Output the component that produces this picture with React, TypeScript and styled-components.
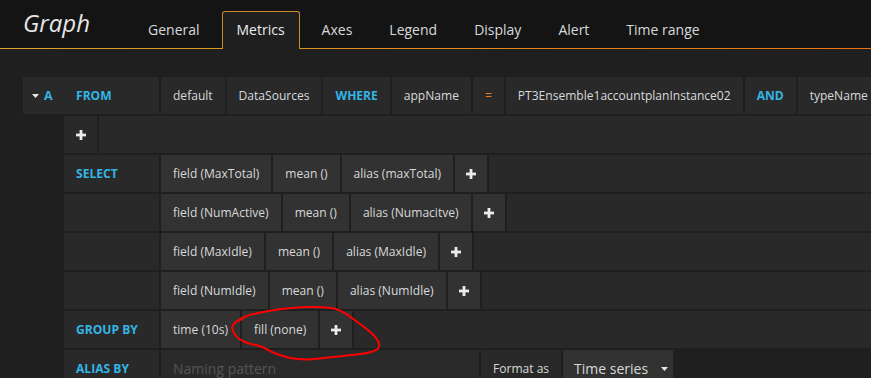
import React from "react";
import styled, { createGlobalStyle, css } from "styled-components";

const GlobalStyle = createGlobalStyle`
  html, body { margin: 0; padding: 0; background: #1f1f1f; overflow: hidden; }
  body { font-family: "Open Sans", "Noto Sans", sans-serif; color: #d8d9da; }
  #root { width: 871px; height: 378px; overflow: hidden; position: relative; }
`;

const Page = styled.div`
  position: relative;
  width: 871px;
  height: 378px;
  overflow: hidden;
`;

const Header = styled.header`
  display: flex;
  align-items: flex-end;
  height: 48px;
  background: #141414;
  padding-left: 23px;
  border-bottom: 1px solid transparent;
  border-image: linear-gradient(to right, #dba326, #e8720f) 1;
`;

const Title = styled.h2`
  margin: 11px 0 0 0;
  align-self: flex-start;
  width: 110px;
  font-size: 24px;
  line-height: 24px;
  font-style: italic;
  font-weight: 400;
  color: #e6e6e6;
`;

const Tab = styled.div<{ $active?: boolean }>`
  height: 38px;
  box-sizing: border-box;
  padding: 0 14px;
  margin-right: 7px;
  margin-bottom: -1px;
  line-height: 35px;
  font-size: 14px;
  color: #d8d9da;
  border: 1px solid transparent;
  border-bottom: none;
  border-radius: 3px 3px 0 0;
  ${(p) =>
    p.$active &&
    css`
      border-color: #c98a2b;
      background: #1f1f1f;
      color: #ececec;
    `}
`;

const Editor = styled.section`
  width: 1100px;
  padding: 28px 0 0 23px;
`;

const Row = styled.div<{ $indent?: boolean }>`
  display: flex;
  flex-wrap: nowrap;
  gap: 2px;
  height: 37px;
  margin-bottom: 2px;
  margin-left: ${(p) => (p.$indent ? 41 : 0)}px;
`;

const RowHead = styled.div`
  display: flex;
`;

const HeadCell = styled.div`
  display: flex;
  align-items: center;
  gap: 5px;
  width: 41px;
  box-sizing: border-box;
  padding-left: 9px;
  background: #292929;
  color: #33b5e5;
  font-weight: 700;
  font-size: 12.5px;
`;

const Keyword = styled.div`
  display: flex;
  align-items: center;
  width: 95px;
  box-sizing: border-box;
  padding-left: 12px;
  background: #292929;
  color: #33b5e5;
  font-weight: 700;
  font-size: 12.1px;
  white-space: nowrap;
`;

const Segment = styled.div<{ $part?: boolean; $color?: string; $bold?: boolean }>`
  display: flex;
  align-items: center;
  padding: 0 12px;
  background: ${(p) => (p.$part ? "#323232" : "#292929")};
  color: ${(p) => p.$color || "#d8d9da"};
  font-weight: ${(p) => (p.$bold ? 700 : 400)};
  font-size: 12.05px;
  white-space: nowrap;
`;

const Plus = styled.div<{ $part?: boolean }>`
  display: flex;
  align-items: center;
  justify-content: center;
  width: ${(p) => (p.$part ? 32 : 33)}px;
  background: ${(p) => (p.$part ? "#323232" : "#292929")};
`;

const Filler = styled.div`
  flex: 1;
  background: #292929;
`;

const AliasInput = styled.input`
  width: 318px;
  box-sizing: border-box;
  padding: 0 12px;
  border: none;
  outline: none;
  background: #2a2a2a;
  font-family: "Open Sans", "Noto Sans", sans-serif;
  font-size: 14px;
  color: #d8d9da;
  &::placeholder {
    color: #555555;
  }
`;

const SelectBox = styled.div`
  display: flex;
  align-items: center;
  gap: 13px;
  padding: 0 5px 0 11px;
  background: #323232;
  font-size: 14px;
  color: #d8d9da;
  white-space: nowrap;
`;

const Annotation = styled.svg`
  position: absolute;
  left: 0;
  top: 0;
  pointer-events: none;
`;

const Caret = () => (
  <svg width="7" height="4" viewBox="0 0 7 4">
    <path d="M0 0 L7 0 L3.5 4 Z" fill="#e8e8e8" />
  </svg>
);

const PlusIcon = () => (
  <svg width="10" height="10" viewBox="0 0 10 10">
    <rect x="0" y="3.6" width="10" height="2.8" fill="#ececec" />
    <rect x="3.6" y="0" width="2.8" height="10" fill="#ececec" />
  </svg>
);

const circlePoints: [number, number][] = [
  [235, 322.7], [245, 316.7], [261.7, 312.3], [281.7, 309], [301.7, 307.3],
  [321.7, 307.3], [335, 308.7], [345, 313.3], [358.3, 322.7], [371.7, 333.3],
  [378.3, 341.7], [378.3, 348.3], [371.7, 351.7], [358.3, 354.3], [335, 356.7],
  [311.7, 359.3], [291.7, 358.3], [275, 353.3], [261.7, 346.7], [248.3, 343.3],
  [238.3, 338.3], [233.3, 331.7], [232.3, 326.7], [235, 322.7], [242, 319],
];

function smoothPath(pts: [number, number][]): string {
  let d = `M${pts[0][0]},${pts[0][1]}`;
  for (let i = 0; i < pts.length - 1; i++) {
    const p0 = pts[i - 1] || pts[i];
    const p1 = pts[i];
    const p2 = pts[i + 1];
    const p3 = pts[i + 2] || p2;
    const c1x = p1[0] + (p2[0] - p0[0]) / 6;
    const c1y = p1[1] + (p2[1] - p0[1]) / 6;
    const c2x = p2[0] - (p3[0] - p1[0]) / 6;
    const c2y = p2[1] - (p3[1] - p1[1]) / 6;
    d += ` C${c1x.toFixed(1)},${c1y.toFixed(1)} ${c2x.toFixed(1)},${c2y.toFixed(1)} ${p2[0]},${p2[1]}`;
  }
  return d;
}

const selectRows = [
  ["field (MaxTotal)", "mean ()", "alias (maxTotal)"],
  ["field (NumActive)", "mean ()", "alias (Numacitve)"],
  ["field (MaxIdle)", "mean ()", "alias (MaxIdle)"],
  ["field (NumIdle)", "mean ()", "alias (NumIdle)"],
];

const tabs = ["General", "Metrics", "Axes", "Legend", "Display", "Alert", "Time range"];

export default function App() {
  return (
    <Page>
      <GlobalStyle />
      <Header>
        <Title>Graph</Title>
        {tabs.map((t) => (
          <Tab key={t} $active={t === "Metrics"}>
            {t}
          </Tab>
        ))}
      </Header>
      <Editor>
        <Row>
          <RowHead>
            <HeadCell>
              <Caret />
              <span>A</span>
            </HeadCell>
            <Keyword>FROM</Keyword>
          </RowHead>
          <Segment>default</Segment>
          <Segment>DataSources</Segment>
          <Segment $color="#33b5e5" $bold>WHERE</Segment>
          <Segment>appName</Segment>
          <Segment $color="#eb7b18">=</Segment>
          <Segment>PT3Ensemble1accountplanInstance02</Segment>
          <Segment $color="#33b5e5" $bold>AND</Segment>
          <Segment>typeName</Segment>
        </Row>
        <Row $indent>
          <Plus>
            <PlusIcon />
          </Plus>
          <Filler />
        </Row>
        {selectRows.map((r, i) => (
          <Row $indent key={i}>
            <Keyword>{i === 0 ? "SELECT" : ""}</Keyword>
            {r.map((s) => (
              <Segment $part key={s}>
                {s}
              </Segment>
            ))}
            <Plus $part>
              <PlusIcon />
            </Plus>
            <Filler />
          </Row>
        ))}
        <Row $indent>
          <Keyword>GROUP BY</Keyword>
          <Segment $part>time (10s)</Segment>
          <Segment $part>fill (none)</Segment>
          <Plus $part>
            <PlusIcon />
          </Plus>
          <Filler />
        </Row>
        <Row $indent>
          <Keyword>ALIAS BY</Keyword>
          <AliasInput placeholder="Naming pattern" />
          <Segment>Format as</Segment>
          <SelectBox>
            <span>Time series</span>
            <Caret />
          </SelectBox>
        </Row>
      </Editor>
      <Annotation width="871" height="378" viewBox="0 0 871 378">
        <path
          d={smoothPath(circlePoints)}
          fill="none"
          stroke="#f00"
          strokeWidth="2"
          strokeLinecap="round"
          strokeLinejoin="round"
        />
      </Annotation>
    </Page>
  );
}
